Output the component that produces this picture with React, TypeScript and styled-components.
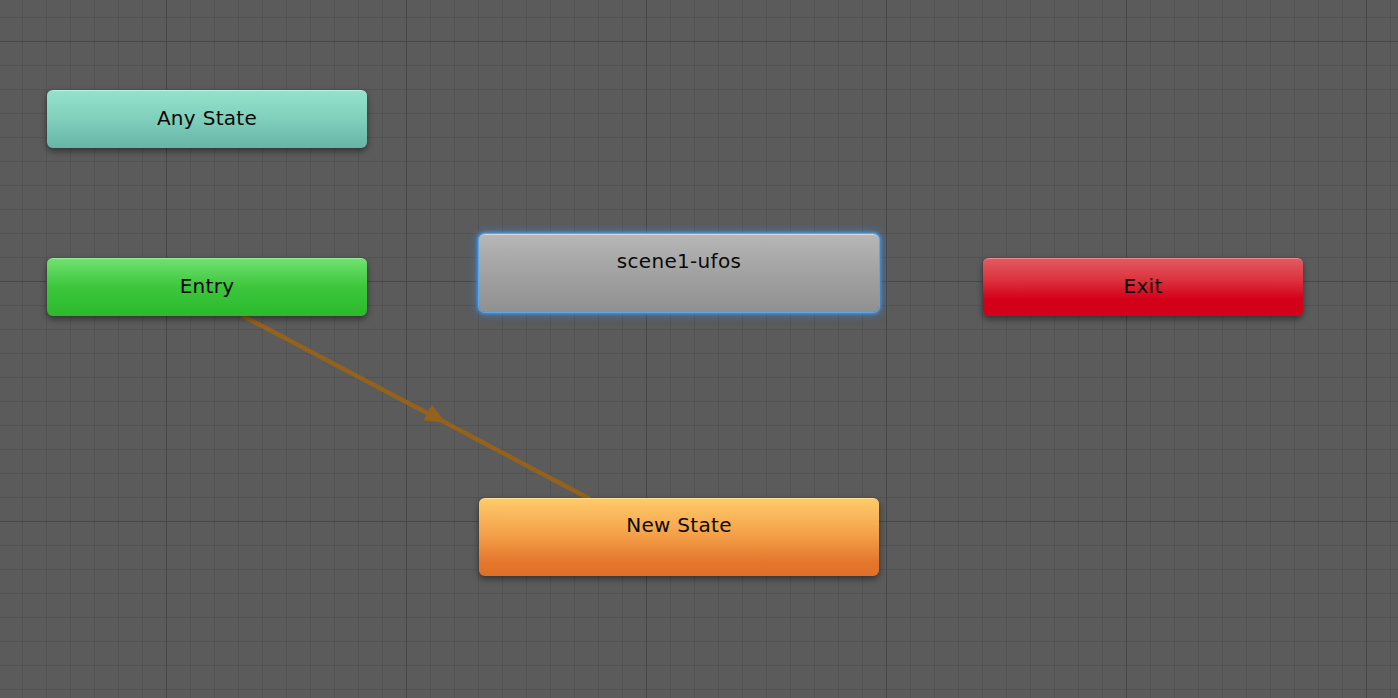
import * as React from 'react';
import styled, { createGlobalStyle, css } from 'styled-components';

const GlobalStyle = createGlobalStyle`
    html, body {
        margin: 0;
        padding: 0;
        overflow: hidden;
    }
    body {
        font-family: 'DejaVu Sans', 'Liberation Sans', sans-serif;
    }
`;

const Canvas = styled.div`
    position: relative;
    width: 1398px;
    height: 698px;
    overflow: hidden;
    background-color: #5b5b5b;
    background-image:
        linear-gradient(to right, #474747 1px, transparent 1px),
        linear-gradient(to bottom, #474747 1px, transparent 1px),
        linear-gradient(to right, #535353 1px, transparent 1px),
        linear-gradient(to bottom, #535353 1px, transparent 1px);
    background-size: 240px 240px, 240px 240px, 24px 24px, 24px 24px;
    background-position: 166px 0, 0 41px, 22px 0, 0 17px;
`;

type Kind = 'any' | 'entry' | 'exit' | 'state' | 'default';

const skins: Record<Kind, ReturnType<typeof css>> = {
    any: css`
        background: linear-gradient(to bottom, #93e2cb 0%, #7fcfbc 50%, #66b5a6 100%);
        border-top: 1px solid #b9f0e0;
    `,
    entry: css`
        background: linear-gradient(to bottom, #6fe06f 0%, #3cc63c 50%, #2bba2b 100%);
        border-top: 1px solid #97ee97;
    `,
    exit: css`
        background: linear-gradient(to bottom, #e2595f 0%, #dc3540 35%, #d4001a 70%, #d2001a 100%);
        border-top: 1px solid #ee8a8e;
    `,
    state: css`
        background: linear-gradient(to bottom, #b6b6b6 0%, #a2a2a2 50%, #909090 100%);
        border-top: 1px solid #d8d8d8;
        box-shadow: 0 0 0 1px #58a6ee, 0 0 3px 2px rgba(70, 155, 240, 0.8), 0 0 8px 3px rgba(60, 140, 230, 0.5);
    `,
    default: css`
        background: linear-gradient(to bottom, #ffca6b 0%, #f4a24a 45%, #e5782d 80%, #e06f27 100%);
        border-top: 1px solid #ffe09a;
    `,
};

const Node = styled.div<{ $kind: Kind; $x: number; $y: number; $w: number; $h: number; $top?: boolean }>`
    position: absolute;
    left: ${(p) => p.$x}px;
    top: ${(p) => p.$y}px;
    width: ${(p) => p.$w}px;
    height: ${(p) => p.$h}px;
    box-sizing: border-box;
    border-radius: 6px;
    box-shadow: 0 3px 6px rgba(0, 0, 0, 0.45);
    display: flex;
    justify-content: center;
    align-items: ${(p) => (p.$top ? 'flex-start' : 'center')};
    padding: ${(p) => (p.$top ? '14px 0 0' : '0 0 4px')};
    color: #0a0a0a;
    font-size: 20px;
    letter-spacing: 0.3px;
    ${(p) => skins[p.$kind]}
`;

const Wires = styled.svg`
    position: absolute;
    left: 0;
    top: 0;
    pointer-events: none;
`;

const nodes: { label: string; kind: Kind; x: number; y: number; w: number; h: number; top?: boolean }[] = [
    { label: 'Any State', kind: 'any', x: 47, y: 90, w: 320, h: 58 },
    { label: 'Entry', kind: 'entry', x: 47, y: 258, w: 320, h: 58 },
    { label: 'scene1-ufos', kind: 'state', x: 479, y: 234, w: 400, h: 78, top: true },
    { label: 'Exit', kind: 'exit', x: 983, y: 258, w: 320, h: 58 },
    { label: 'New State', kind: 'default', x: 479, y: 498, w: 400, h: 78, top: true },
];

const App: React.FC = () => {
    // transition Entry -> New State
    const x1 = 243, y1 = 316, x2 = 590, y2 = 499;
    const mx = (x1 + x2) / 2 + 20, my = (y1 + y2) / 2 + 10;
    const ang = Math.atan2(y2 - y1, x2 - x1);
    const ux = Math.cos(ang), uy = Math.sin(ang);
    const tip = [mx + ux * 10, my + uy * 10];
    const base = [mx - ux * 10, my - uy * 10];
    const p1 = [base[0] - uy * 9, base[1] + ux * 9];
    const p2 = [base[0] + uy * 9, base[1] - ux * 9];

    return (
        <>
            <GlobalStyle />
            <Canvas>
                <Wires width={1398} height={698}>
                    <line x1={x1} y1={y1} x2={x2} y2={y2} stroke="#94621c" strokeWidth={4.5} />
                    <polygon
                        points={`${tip[0]},${tip[1]} ${p1[0]},${p1[1]} ${p2[0]},${p2[1]}`}
                        fill="#94621c"
                    />
                </Wires>
                {nodes.map((n) => (
                    <Node key={n.label} $kind={n.kind} $x={n.x} $y={n.y} $w={n.w} $h={n.h} $top={n.top}>
                        {n.label}
                    </Node>
                ))}
            </Canvas>
        </>
    );
};

export default App;
